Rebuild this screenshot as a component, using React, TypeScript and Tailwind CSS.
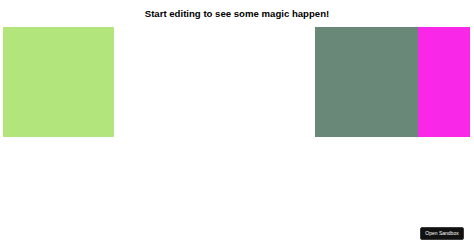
import React from 'react';

const App: React.FC = () => {
	return (
		<div className="relative w-[474px] h-[248px] bg-white overflow-hidden" style={{ fontFamily: '"Liberation Sans", Arial, sans-serif' }}>
			{/* Heading */}
			<h2 className="pt-[9px] text-center text-[9.6px] leading-[10px] font-bold text-black">
				Start editing to see some magic happen!
			</h2>

			{/* Boxes */}
			<div className="mt-[8px] flex justify-between pl-[3px] pr-[4px]">
				<div className="w-[111px] h-[110px] bg-[#b2e67d]" />
				<div className="flex">
					<div className="w-[103px] h-[110px] bg-[#6a8877]" />
					<div className="w-[52px] h-[110px] bg-[#f928e8]" />
				</div>
			</div>

			{/* Open Sandbox button */}
			<button className="absolute right-[10px] bottom-[8px] w-[44px] h-[13px] flex items-center justify-center rounded-[2px] border border-[#3a3a3a] bg-[#111] text-white text-[5px] leading-none">
				Open Sandbox
			</button>
		</div>
	);
};

export default App;
